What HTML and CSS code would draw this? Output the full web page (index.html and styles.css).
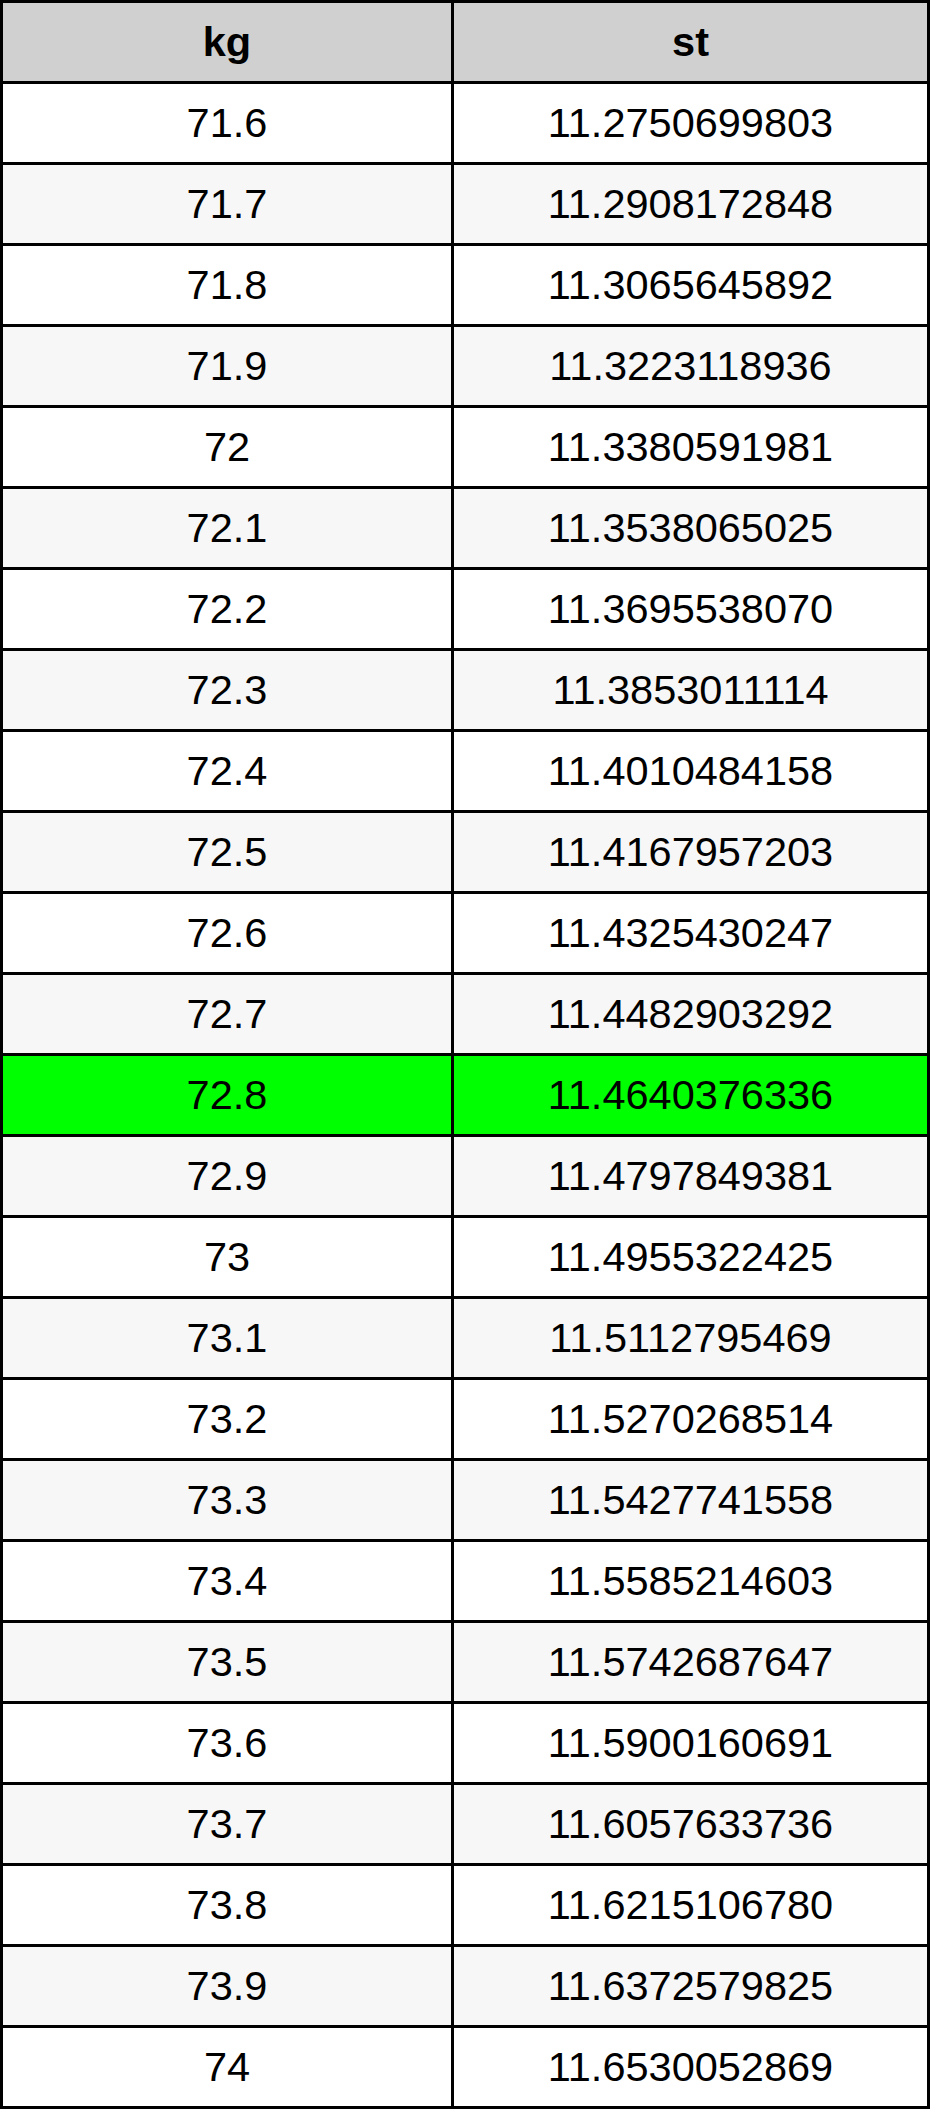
FILE: index.html
```html
<!DOCTYPE html>
<html>
<head>
<meta charset="utf-8">
<link rel="stylesheet" href="styles.css">
</head>
<body>
<table class="conv">
<thead>
<tr><th class="c1">kg</th><th class="c2">st</th></tr>
</thead>
<tbody>
<tr><td>71.6</td><td>11.2750699803</td></tr>
<tr class="alt"><td>71.7</td><td>11.2908172848</td></tr>
<tr><td>71.8</td><td>11.3065645892</td></tr>
<tr class="alt"><td>71.9</td><td>11.3223118936</td></tr>
<tr><td>72</td><td>11.3380591981</td></tr>
<tr class="alt"><td>72.1</td><td>11.3538065025</td></tr>
<tr><td>72.2</td><td>11.3695538070</td></tr>
<tr class="alt"><td>72.3</td><td>11.3853011114</td></tr>
<tr><td>72.4</td><td>11.4010484158</td></tr>
<tr class="alt"><td>72.5</td><td>11.4167957203</td></tr>
<tr><td>72.6</td><td>11.4325430247</td></tr>
<tr class="alt"><td>72.7</td><td>11.4482903292</td></tr>
<tr class="hl"><td>72.8</td><td>11.4640376336</td></tr>
<tr class="alt"><td>72.9</td><td>11.4797849381</td></tr>
<tr><td>73</td><td>11.4955322425</td></tr>
<tr class="alt"><td>73.1</td><td>11.5112795469</td></tr>
<tr><td>73.2</td><td>11.5270268514</td></tr>
<tr class="alt"><td>73.3</td><td>11.5427741558</td></tr>
<tr><td>73.4</td><td>11.5585214603</td></tr>
<tr class="alt"><td>73.5</td><td>11.5742687647</td></tr>
<tr><td>73.6</td><td>11.5900160691</td></tr>
<tr class="alt"><td>73.7</td><td>11.6057633736</td></tr>
<tr><td>73.8</td><td>11.6215106780</td></tr>
<tr class="alt"><td>73.9</td><td>11.6372579825</td></tr>
<tr><td>74</td><td>11.6530052869</td></tr>
</tbody>
</table>
</body>
</html>
```

FILE: styles.css
```css
html, body {
  margin: 0;
  padding: 0;
  background: #ffffff;
}

.conv {
  border-collapse: collapse;
  table-layout: fixed;
  width: 930px;
  font-family: "Liberation Sans", Arial, sans-serif;
  font-size: 41.5px;
  color: #000;
}

.conv th,
.conv td {
  border: 3px solid #000;
  height: 78px;
  padding: 0;
  text-align: center;
  vertical-align: middle;
  line-height: 1;
}

.conv th {
  background: #d0d0d0;
  font-weight: bold;
}

.conv .c1 {
  width: 448px;
}

.conv .c2 {
  width: 473px;
}

.conv tr.alt td {
  background: #f7f7f7;
}

.conv tr.hl td {
  background: #00ff00;
}
```
